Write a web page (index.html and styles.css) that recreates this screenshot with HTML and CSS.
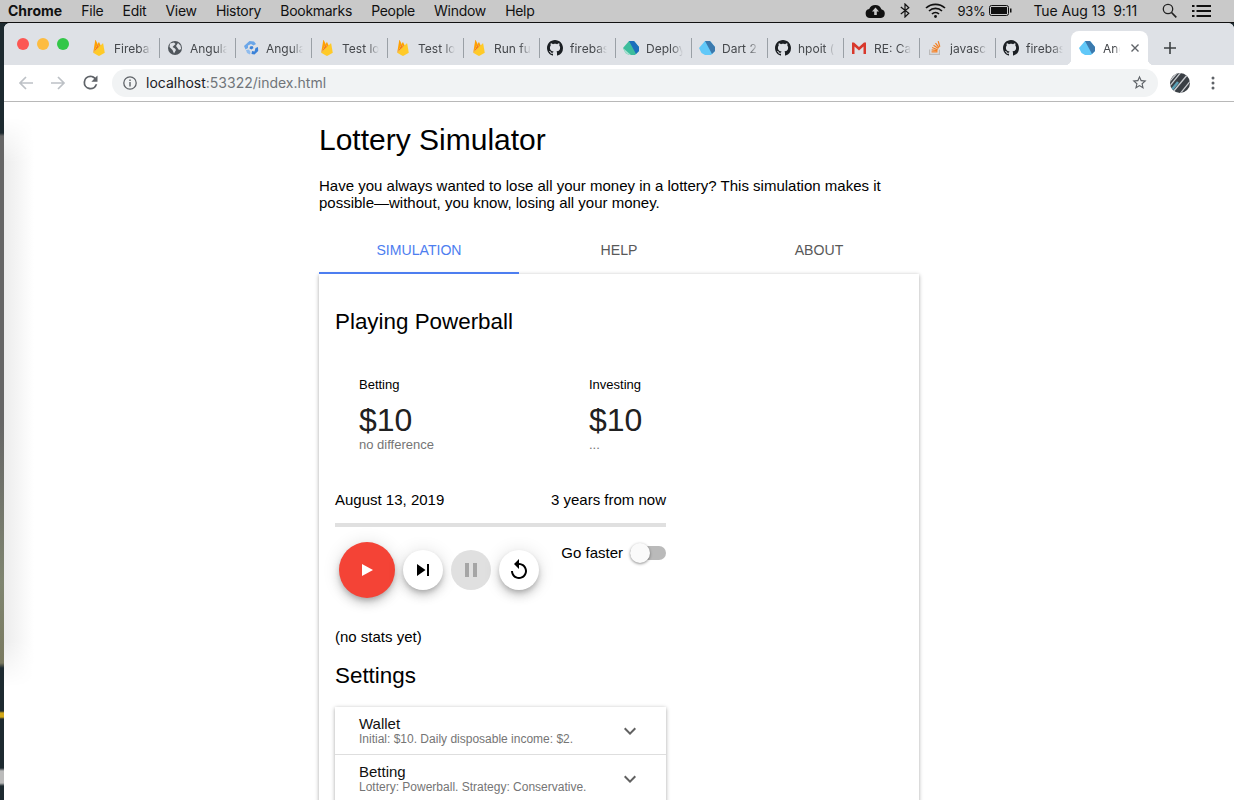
FILE: index.html
```html
<!DOCTYPE html>
<html lang="en">
<head>
<meta charset="utf-8">
<title>Lottery Simulator</title>
<link rel="stylesheet" href="styles.css">
</head>
<body>
<svg class="defs" width="0" height="0" aria-hidden="true">
  <symbol id="fire" viewBox="0 0 32 32">
    <path fill="#ffa000" d="M19.620 11.558l-3.203 2.980-2.972-5.995 1.538-3.448c.4-.7 1.024-.692 1.414 0z"/>
    <path fill="#f57f17" d="M13.445 8.543l2.972 5.995-11.970 11.135z"/>
    <path fill="#ffca28" d="M23.123 7.003c.572-.55 1.164-.362 1.315.417l3.116 18.105-10.328 6.200c-.36.200-1.320.286-1.320.286s-.874-.104-1.207-.3L4.447 25.673z"/>
    <path fill="#ffa000" d="M13.445 8.543l-8.997 17.130L8.455.638c.148-.78.592-.860.988-.17z"/>
  </symbol>
  <symbol id="globe" viewBox="0 0 16 16">
    <circle cx="8" cy="8" r="7" fill="#50565c"/>
    <path fill="#dee1e6" d="M3 3.500 7 2.500l1.500 1.500-1.500 1.500L5.500 7l2.500 1.500 1 1.500-2 3.500L5.500 10 2.500 7zM11 3l2.500 2.500.7 3.500-2.200 1-1.500-2-1.500-2z"/>
  </symbol>
  <symbol id="ang" viewBox="0 0 16 16">
    <path fill="#6ba6e8" d="M6.500 1 11 1.500l2 2.500-2.500 1.500L8 4 5 5.500V8L2.500 9.500 1 6z"/>
    <path fill="#3b82d8" d="M15 7l.2 4-3.700 3.500-3-.5 .5-3 2.500.5 1-3.500z"/>
    <path fill="#8fbcee" d="M3 10l3-.5 1.500 2.500-.5 2.500-3-1.500z"/>
    <path fill="#3b82d8" d="M7 6.500l2.500-.5 1 2-2 1.500-2-1z"/>
  </symbol>
  <symbol id="github" viewBox="0 0 16 16">
    <path fill="#1b1f23" d="M8 0C3.580 0 0 3.580 0 8c0 3.540 2.290 6.530 5.470 7.590.4.070.55-.17.55-.38 0-.19-.01-.82-.01-1.490-2.010.37-2.530-.49-2.690-.94-.09-.23-.48-.94-.82-1.130-.28-.15-.68-.52-.01-.53.63-.01 1.080.58 1.230.82.72 1.210 1.870.87 2.330.66.07-.52.28-.87.51-1.070-1.780-.2-3.640-.89-3.640-3.950 0-.87.31-1.590.82-2.150-.08-.2-.36-1.020.08-2.120 0 0 .67-.21 2.200.82.64-.18 1.320-.27 2-.27.68 0 1.360.09 2 .27 1.530-1.040 2.200-.82 2.200-.82.44 1.100.16 1.920.08 2.120.51.56.82 1.270.82 2.150 0 3.070-1.870 3.750-3.650 3.950.29.25.54.730.54 1.480 0 1.070-.01 1.930-.01 2.200 0 .21.15.46.55.38A8.013 8.013 0 0 0 16 8c0-4.420-3.580-8-8-8z"/>
  </symbol>
  <symbol id="dartgreen" viewBox="0 0 16 16">
    <path fill="#3dbd9c" d="M0 8 6 1h5l5 6v4l-4 4H6l-3.500-2z"/>
    <path fill="#1b6fbd" d="M6 1h5l5 6v4l-3 3z"/>
    <path fill="#a6e0d0" d="M0 8l2.500 5L6 15h2z"/>
  </symbol>
  <symbol id="dart" viewBox="0 0 16 16">
    <path fill="#61c8f8" d="M0 8 6 1h5l5 6v4l-4 4H6l-3.500-2z"/>
    <path fill="#3b79ad" d="M6 1h5l5 6v4l-3 3z"/>
  </symbol>
  <symbol id="gmail" viewBox="0 0 16 16">
    <path fill="#d8382c" d="M1 2.500h2L8 7l5-4.500h2V14h-2.500V6.500L8 10.500 3.500 6.500V14H1z"/>
  </symbol>
  <symbol id="so" viewBox="0 0 16 16">
    <path fill="#bcbbbb" d="M2 9.500h1.200v4.300h8.600V9.500H13V15H2z"/>
    <path fill="#f48024" d="M4.500 11.200h6v1.200h-6zM4.700 9.200l5.900.9-.2 1.200-5.900-.9zM5.400 7l5.500 2.200-.5 1.100-5.500-2.200zM6.900 4.700l4.800 3.300-.7 1-4.800-3.300zM9 2.700l3.500 4.600-1 .7L8 3.400zM11.800 1l1.600 5.600-1.200.3-1.600-5.600z"/>
  </symbol>
  <symbol id="chev" viewBox="0 0 24 24">
    <path fill="#616161" d="M7.410 8.590 12 13.170l4.590-4.580L18 10l-6 6-6-6z"/>
  </symbol>
</svg>

<div class="screen">
  <header class="menubar">
    <nav class="menus">
      <span class="menu-app">Chrome</span>
      <span>File</span><span>Edit</span><span>View</span><span>History</span>
      <span>Bookmarks</span><span>People</span><span>Window</span><span>Help</span>
    </nav>
    <div class="status">
      <svg class="st-cloud" width="21" height="14" viewBox="0 0 21 14"><path fill="#111" d="M5 14a4.500 4.500 0 0 1-.8-8.900A6.500 6.500 0 0 1 16.400 5.200 4.500 4.500 0 0 1 16 14z"/><path fill="#c9c9c9" d="M10.500 3.500 14 7.500h-2.200V11H9.200V7.500H7z"/></svg>
      <svg class="st-bt" width="10" height="15" viewBox="0 0 10 15"><path fill="none" stroke="#111" stroke-width="1.200" d="M.8 4l8 6.300L5 14V1l3.800 3.700L.8 11"/></svg>
      <svg class="st-wifi" width="21" height="15" viewBox="0 0 21 15"><g fill="none" stroke="#111" stroke-width="1.700"><path d="M1 5a14 14 0 0 1 19 0"/><path d="M4 8a9.500 9.500 0 0 1 13 0"/><path d="M7 11a5 5 0 0 1 7 0"/></g><circle cx="10.500" cy="13.500" r="1.400" fill="#111"/></svg>
      <span class="st-pct">93%</span>
      <svg class="st-bat" width="23" height="11" viewBox="0 0 23 11"><rect x=".5" y=".5" width="19" height="10" rx="2" fill="none" stroke="#111"/><rect x="2" y="2" width="16" height="7" fill="#111"/><rect x="21" y="3.500" width="1.500" height="4" fill="#111"/></svg>
      <span class="st-clock">Tue Aug 13&nbsp; 9:11</span>
      <svg class="st-search" width="15" height="15" viewBox="0 0 15 15"><circle cx="6" cy="6" r="4.700" fill="none" stroke="#222" stroke-width="1.300"/><path d="m9.500 9.500 4.800 4.800" stroke="#222" stroke-width="1.700"/></svg>
      <svg class="st-list" width="19" height="12" viewBox="0 0 19 12"><path fill="#111" d="M0 0h2.500v2H0zM4.500 0H19v2H4.500zM0 5h2.500v2H0zM4.500 5H19v2H4.500zM0 10h2.500v2H0zM4.500 10H19v2H4.500z"/></svg>
    </div>
  </header>

  <div class="desk">
    <div class="window">
      <div class="tabstrip">
        <div class="lights"><i class="light red"></i><i class="light amber"></i><i class="light green"></i></div>
        <div class="tabs">
          <div class="tab"><svg class="fav"><use href="#fire"/></svg><span class="tab-title">Firebase</span></div>
          <div class="tab"><svg class="fav"><use href="#globe"/></svg><span class="tab-title">Angular</span></div>
          <div class="tab"><svg class="fav"><use href="#ang"/></svg><span class="tab-title">Angular</span></div>
          <div class="tab"><svg class="fav"><use href="#fire"/></svg><span class="tab-title">Test loc</span></div>
          <div class="tab"><svg class="fav"><use href="#fire"/></svg><span class="tab-title">Test loc</span></div>
          <div class="tab"><svg class="fav"><use href="#fire"/></svg><span class="tab-title">Run fun</span></div>
          <div class="tab"><svg class="fav"><use href="#github"/></svg><span class="tab-title">firebase</span></div>
          <div class="tab"><svg class="fav"><use href="#dartgreen"/></svg><span class="tab-title">Deploy</span></div>
          <div class="tab"><svg class="fav"><use href="#dart"/></svg><span class="tab-title">Dart 2</span></div>
          <div class="tab"><svg class="fav"><use href="#github"/></svg><span class="tab-title">hpoit (</span></div>
          <div class="tab"><svg class="fav"><use href="#gmail"/></svg><span class="tab-title">RE: Ca</span></div>
          <div class="tab"><svg class="fav"><use href="#so"/></svg><span class="tab-title">javascr</span></div>
          <div class="tab tab-last"><svg class="fav"><use href="#github"/></svg><span class="tab-title">firebase</span></div>
          <div class="tab tab-active"><svg class="fav"><use href="#dart"/></svg><span class="tab-title tab-title-short">Angular</span>
            <svg class="tab-close" width="10" height="10" viewBox="0 0 10 10"><path d="m1.500 1.500 7 7m0-7-7 7" stroke="#5f6368" stroke-width="1.400"/></svg>
          </div>
          <svg class="newtab" width="12" height="12" viewBox="0 0 12 12"><path d="M6 0v12M0 6h12" stroke="#3c4043" stroke-width="1.600"/></svg>
        </div>
      </div>

      <div class="toolbar">
        <svg class="tb tb-back" width="16" height="16" viewBox="0 0 16 16"><path d="M15 8H2M8 2 2 8l6 6" fill="none" stroke="#bdc1c6" stroke-width="1.700"/></svg>
        <svg class="tb tb-fwd" width="16" height="16" viewBox="0 0 16 16"><path d="M1 8h13M8 2l6 6-6 6" fill="none" stroke="#bdc1c6" stroke-width="1.700"/></svg>
        <svg class="tb tb-reload" width="21" height="21" viewBox="0 0 24 24"><path fill="#5f6368" d="M17.650 6.350A8 8 0 0 0 12 4a8 8 0 1 0 7.730 10h-2.080A6 6 0 1 1 12 6c1.660 0 3.140.69 4.220 1.780L13 11h7V4z"/></svg>
        <div class="omnibox">
          <svg class="info" width="14" height="14" viewBox="0 0 14 14"><circle cx="7" cy="7" r="6.200" fill="none" stroke="#5f6368" stroke-width="1.300"/><path d="M6.300 6h1.400v4.500H6.300zM6.300 3.500h1.400v1.400H6.300z" fill="#5f6368"/></svg>
          <span class="url"><span class="url-host">localhost</span>:53322/index.html</span>
          <svg class="star" width="17" height="17" viewBox="0 0 24 24"><path fill="#5f6368" d="m22 9.240-7.190-.62L12 2 9.190 8.630 2 9.240l5.460 4.730L5.820 21 12 17.270 18.180 21l-1.630-7.030zM12 15.400l-3.760 2.270 1-4.280-3.320-2.880 4.380-.38L12 6.100l1.710 4.040 4.380.38-3.320 2.880 1 4.280z"/></svg>
        </div>
        <svg class="avatar" width="20" height="20" viewBox="0 0 20 20"><defs><clipPath id="avc"><circle cx="10" cy="10" r="10"/></clipPath></defs><g clip-path="url(#avc)"><rect width="20" height="20" fill="#3a3f45"/><path d="M-1 14 12-2M3 19 18 1M9 22 22 6M0 8 7 0" stroke="#c9ccd0" stroke-width="1.300" fill="none"/><path d="M0 19 8 9" stroke="#5b9fb5" stroke-width="2.500"/></g></svg>
        <svg class="kebab" width="4" height="14" viewBox="0 0 4 14"><g fill="#5f6368"><circle cx="2" cy="2" r="1.500"/><circle cx="2" cy="7" r="1.500"/><circle cx="2" cy="12" r="1.500"/></g></svg>
      </div>

      <main class="page">
        <div class="content">
          <h1 class="title">Lottery Simulator</h1>
          <p class="intro">Have you always wanted to lose all your money in a lottery? This simulation makes it possible—without, you know, losing all your money.</p>
          <div class="nav-tabs">
            <div class="nav-tab nav-tab-active">SIMULATION</div>
            <div class="nav-tab">HELP</div>
            <div class="nav-tab">ABOUT</div>
          </div>
          <section class="card">
            <h2 class="game-title">Playing Powerball</h2>
            <div class="scores">
              <div class="score">
                <div class="score-label">Betting</div>
                <div class="score-value">$10</div>
                <div class="score-note">no difference</div>
              </div>
              <div class="score">
                <div class="score-label">Investing</div>
                <div class="score-value">$10</div>
                <div class="score-note">...</div>
              </div>
            </div>
            <div class="column">
              <div class="dates"><span>August 13, 2019</span><span>3 years from now</span></div>
              <div class="progress"></div>
              <div class="controls">
                <div class="buttons">
                  <button class="fab" aria-label="Play"><svg width="24" height="24" viewBox="0 0 24 24"><path fill="#fff" d="M7 6v12l11-6z"/></svg></button>
                  <button class="mini" aria-label="Step"><svg width="24" height="24" viewBox="0 0 24 24"><path fill="#000" d="m6 18 8.500-6L6 6zM16 6v12h2V6z"/></svg></button>
                  <button class="mini mini-off" aria-label="Pause"><svg width="24" height="24" viewBox="0 0 24 24"><path fill="#a6a6a6" d="M6 5h4v14H6zM14 5h4v14h-4z"/></svg></button>
                  <button class="mini" aria-label="Reset"><svg width="24" height="24" viewBox="0 0 24 24"><path fill="#000" d="M12 5V1L7 6l5 5V7c3.310 0 6 2.690 6 6s-2.690 6-6 6-6-2.690-6-6H4c0 4.420 3.580 8 8 8s8-3.580 8-8-3.580-8-8-8z"/></svg></button>
                </div>
                <div class="faster">
                  <span class="faster-label">Go faster</span>
                  <span class="toggle"><span class="thumb"></span></span>
                </div>
              </div>
              <p class="nostats">(no stats yet)</p>
              <h2 class="settings">Settings</h2>
              <div class="panels">
                <div class="panel">
                  <div class="panel-text">
                    <div class="panel-name">Wallet</div>
                    <div class="panel-sub">Initial: $10. Daily disposable income: $2.</div>
                  </div>
                  <svg class="chevron"><use href="#chev"/></svg>
                </div>
                <div class="panel">
                  <div class="panel-text">
                    <div class="panel-name">Betting</div>
                    <div class="panel-sub">Lottery: Powerball. Strategy: Conservative.</div>
                  </div>
                  <svg class="chevron"><use href="#chev"/></svg>
                </div>
              </div>
            </div>
          </section>
        </div>
      </main>
    </div>
  </div>
</div>
</body>
</html>
```

FILE: styles.css
```css
* { box-sizing: border-box; }
html, body { margin: 0; height: 100%; }
body { overflow: hidden; background: #fff; font-family: "Liberation Sans", Arial, sans-serif; color: #000; }
.defs { position: absolute; }
.screen { width: 1234px; height: 800px; display: flex; flex-direction: column; overflow: hidden; }

/* macOS menu bar */
.menubar { flex: 0 0 23px; height: 23px; background: #c9c9c9; border-bottom: 1px solid #111; display: flex; justify-content: space-between; align-items: center; padding: 0 23px 1px 8px; font-family: Inter, "Noto Sans", sans-serif; font-size: 14px; color: #111; }
.menus { display: flex; gap: 19.200px; letter-spacing: -.3px; }
.menu-app { font-weight: 700; letter-spacing: 0; }
.status { display: flex; align-items: center; }
.st-cloud { margin-right: 0; }
.st-bt { margin-left: 14px; }
.st-wifi { margin-left: 15px; }
.st-pct { margin-left: 11px; font-size: 13px; letter-spacing: -.3px; }
.st-bat { margin-left: 4px; }
.st-clock { margin-left: 21px; letter-spacing: -.1px; }
.st-search { margin-left: 25px; }
.st-list { margin-left: 15px; }

/* desktop and window */
.desk { flex: 1; min-height: 0; display: flex; padding-left: 4px; background: linear-gradient(#1d2a30 0, #1d2a30 110px, #666 113px, #666 400px, #7f8570 560px, #7a7a60 640px, #1d2a30 645px, #1d2a30 688px, #d2a818 690px, #d2a818 694px, #1d2a30 696px, #1d2a30 745px, #bbb 748px, #bbb 760px, #1d2a30 763px); }
.window { flex: 1; min-width: 0; display: flex; flex-direction: column; background: #fff; border-radius: 6px 6px 0 0; overflow: hidden; }

/* tab strip */
.tabstrip { flex: 0 0 42px; background: #dee1e6; display: flex; align-items: flex-end; }
.lights { width: 79px; height: 42px; display: flex; gap: 8px; padding: 15px 0 0 13px; }
.light { width: 12px; height: 12px; border-radius: 50%; }
.red { background: #fc5753; }
.amber { background: #fdbc40; }
.green { background: #33c748; }
.tabs { display: flex; align-items: flex-end; height: 34px; }
.tab { position: relative; width: 76px; height: 34px; display: flex; align-items: center; padding: 0 0 0 8px; }
.tab::after { content: ""; position: absolute; right: -1px; top: 7px; height: 20px; width: 1px; background: #9aa0a6; }
.tab-last::after { display: none; }
.fav { flex: 0 0 16px; width: 16px; height: 16px; }
.tab-title { margin-left: 7px; width: 37px; overflow: hidden; white-space: nowrap; font-family: Inter, Roboto, sans-serif; font-size: 12px; color: #45484c; -webkit-mask-image: linear-gradient(to right, #000 70%, transparent); mask-image: linear-gradient(to right, #000 70%, transparent); }
.tab-active { width: 77px; background: #fff; border-radius: 8px 8px 0 0; }
.tab-active::after { display: none; }
.tab-active::before { content: ""; position: absolute; left: -6px; right: -6px; bottom: 0; height: 6px; z-index: 0; background: radial-gradient(circle at 0 0, #dee1e6 6px, #fff 6.500px) left bottom / 6px 6px no-repeat, radial-gradient(circle at 100% 0, #dee1e6 6px, #fff 6.500px) right bottom / 6px 6px no-repeat; }
.tab-active > * { position: relative; z-index: 1; }
.tab-title-short { width: 17px; margin-left: 8px; }
.tab-close { margin-left: 10px; }
.newtab { margin: 0 0 11px 16px; }

/* toolbar */
.toolbar { flex: 0 0 37px; height: 37px; background: #fff; border-bottom: 1px solid #b8b8b8; display: flex; align-items: center; padding: 0 0 1px 14px; }
.tb-fwd { margin-left: 16px; }
.tb-reload { margin-left: 14px; }
.omnibox { margin-left: 11px; width: 1046px; height: 28px; border-radius: 14px; background: #f1f3f4; display: flex; align-items: center; padding: 0 10px 0 11px; }
.url { flex: 1; margin-left: 9px; font-family: Inter, Roboto, sans-serif; font-size: 14px; color: #70757a; }
.url-host { color: #202124; }
.avatar { margin-left: 12px; }
.kebab { margin-left: 21px; }

/* page */
.page { position: relative; flex: 1; min-height: 0; overflow: hidden; background: #fff; }
.page::before { content: ""; position: absolute; left: 0; top: 15px; width: 30px; height: 570px; background: linear-gradient(to right, #ececec, #fff); -webkit-mask-image: linear-gradient(transparent, #000 8%, #000 92%, transparent); mask-image: linear-gradient(transparent, #000 8%, #000 92%, transparent); }
.content { position: relative; width: 600px; margin: 0 auto; }
.title { margin: 0; padding-top: 19px; font-size: 30px; line-height: 38px; font-weight: 400; }
.intro { margin: 18px 0 0; font-size: 15px; line-height: 17px; }
.nav-tabs { display: flex; margin-top: 17px; }
.nav-tab { width: 200px; height: 46px; display: flex; align-items: center; justify-content: center; font-size: 14.100px; color: #595959; border-bottom: 2px solid transparent; }
.nav-tab-active { color: #4d7ef0; border-bottom-color: #4d7ef0; }
.card { height: 700px; padding: 0 16px; background: #fff; box-shadow: 0 1px 4px rgba(0,0,0,.35); }
.game-title { margin: 0; padding-top: 34px; font-size: 22.400px; line-height: 28px; font-weight: 400; }
.scores { display: flex; margin-top: 41px; padding-left: 24px; }
.score { width: 230px; }
.score-label { font-size: 13px; line-height: 15px; }
.score-value { margin-top: 9px; font-size: 32px; line-height: 38px; color: #212121; }
.score-note { margin-top: -1px; font-size: 13px; line-height: 14px; color: #757575; }
.column { width: 331px; }
.dates { display: flex; justify-content: space-between; margin-top: 39px; font-size: 15px; line-height: 17px; }
.progress { height: 4px; margin-top: 15px; background: #e0e0e0; }
.controls { display: flex; justify-content: space-between; align-items: flex-start; padding: 15px 0 0 4px; }
.buttons { display: flex; align-items: center; gap: 8px; }
button { padding: 0; border: 0; display: flex; align-items: center; justify-content: center; border-radius: 50%; }
.fab { width: 56px; height: 56px; background: #f44336; box-shadow: 0 3px 5px -1px rgba(0,0,0,.2), 0 6px 10px rgba(0,0,0,.14), 0 1px 18px rgba(0,0,0,.12); }
.mini { width: 40px; height: 40px; background: #fff; box-shadow: 0 3px 5px -1px rgba(0,0,0,.2), 0 6px 10px rgba(0,0,0,.14), 0 1px 18px rgba(0,0,0,.12); }
.mini-off { background: #e0e0e0; box-shadow: none; }
.faster { display: flex; align-items: center; gap: 7px; height: 22px; font-size: 15px; }
.faster-label { margin-bottom: 2px; }
.toggle { position: relative; width: 36px; height: 14px; border-radius: 7px; background: #bababa; }
.thumb { position: absolute; left: 0; top: -3px; width: 20px; height: 20px; border-radius: 50%; background: #fafafa; box-shadow: 0 1px 3px rgba(0,0,0,.45); }
.nostats { margin: 30px 0 0; font-size: 15px; line-height: 17px; }
.settings { margin: 0; padding-top: 17px; font-size: 22.400px; line-height: 28px; font-weight: 400; }
.panels { margin-top: 17px; box-shadow: 0 1px 4px rgba(0,0,0,.35); }
.panel { height: 48px; display: flex; align-items: center; padding: 1px 24px 0; border-bottom: 1px solid #dedede; }
.panel-text { flex: 1; }
.panel-name { font-size: 15px; line-height: 16px; color: #111; }
.panel-sub { margin-top: 1px; font-size: 12px; line-height: 13px; color: #757575; }
.chevron { width: 24px; height: 24px; }
```
